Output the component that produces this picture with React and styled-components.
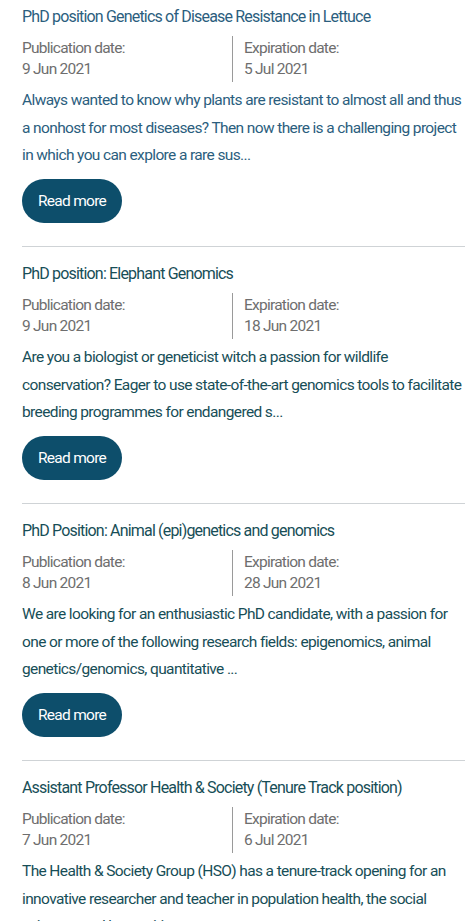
import React from "react";
import styled, { createGlobalStyle } from "styled-components";

const Global = createGlobalStyle`
  html, body { margin: 0; padding: 0; background: #fff; }
  body { font-family: Roboto, "Liberation Sans", Arial, sans-serif; -webkit-font-smoothing: antialiased; }
  * { box-sizing: border-box; }
`;

const List = styled.div`
  padding: 0 9px 0 22px;
  display: flex;
  flex-direction: column;
`;

const Item = styled.article`
  padding: 15px 0 23px;
  border-bottom: 1px solid #cfd3d6;
  &:first-child { padding-top: 5px; }
`;

const Title = styled.h3`
  margin: 0;
  font-size: 16px;
  font-weight: 400;
  line-height: 24px;
  letter-spacing: -0.82px;
  color: ${(p) => (p.$blue ? "#2b5e7e" : "#174e57")};
`;

const Dates = styled.div`
  display: flex;
  margin-top: 7px;
`;

const DateCol = styled.div`
  flex: ${(p) => (p.$first ? "0 0 210px" : "1")};
  padding: 2px 0 2px ${(p) => (p.$first ? "0" : "11px")};
  border-left: ${(p) => (p.$first ? "none" : "1px solid #9a9a9a")};
  color: #6e6e6e;
  font-size: 15.5px;
  line-height: 21px;
  letter-spacing: -0.75px;
`;

const Desc = styled.p`
  margin: 5px -4px 0 0;
  font-size: 15.5px;
  line-height: 27.5px;
  letter-spacing: -0.62px;
  color: ${(p) => (p.$blue ? "#2b5e7e" : "#174e57")};
`;

const Button = styled.a`
  display: inline-flex;
  align-items: center;
  justify-content: center;
  margin-top: 9.5px;
  width: 100px;
  height: 44px;
  border-radius: 22px;
  background: #0d4e6b;
  color: #fff;
  font-size: 15.5px;
  letter-spacing: -0.7px;
  text-decoration: none;
`;

const items = [
  {
    title: "PhD position Genetics of Disease Resistance in Lettuce",
    pub: "9 Jun 2021",
    exp: "5 Jul 2021",
    desc: "Always wanted to know why plants are resistant to almost all and thus a nonhost for most diseases? Then now there is a challenging project in which you can explore a rare sus...",
    blue: true,
    button: true,
  },
  {
    title: "PhD position: Elephant Genomics",
    pub: "9 Jun 2021",
    exp: "18 Jun 2021",
    desc: "Are you a biologist or geneticist witch a passion for wildlife conservation? Eager to use state-of-the-art genomics tools to facilitate breeding programmes for endangered s...",
    button: true,
  },
  {
    title: "PhD Position: Animal (epi)genetics and genomics",
    pub: "8 Jun 2021",
    exp: "28 Jun 2021",
    desc: "We are looking for an enthusiastic PhD candidate, with a passion for one or more of the following research fields: epigenomics, animal genetics/genomics, quantitative ...",
    button: true,
  },
  {
    title: "Assistant Professor Health & Society (Tenure Track position)",
    pub: "7 Jun 2021",
    exp: "6 Jul 2021",
    desc: "The Health & Society Group (HSO) has a tenure-track opening for an innovative researcher and teacher in population health, the social sciences and humanities...",
    button: true,
  },
];

export default function App() {
  return (
    <>
      <Global />
      <List>
        {items.map((it) => (
          <Item key={it.title}>
            <Title $blue={it.blue}>{it.title}</Title>
            <Dates>
              <DateCol $first>
                Publication date:
                <br />
                {it.pub}
              </DateCol>
              <DateCol>
                Expiration date:
                <br />
                {it.exp}
              </DateCol>
            </Dates>
            <Desc $blue={it.blue}>{it.desc}</Desc>
            {it.button && <Button href="#">Read more</Button>}
          </Item>
        ))}
      </List>
    </>
  );
}
